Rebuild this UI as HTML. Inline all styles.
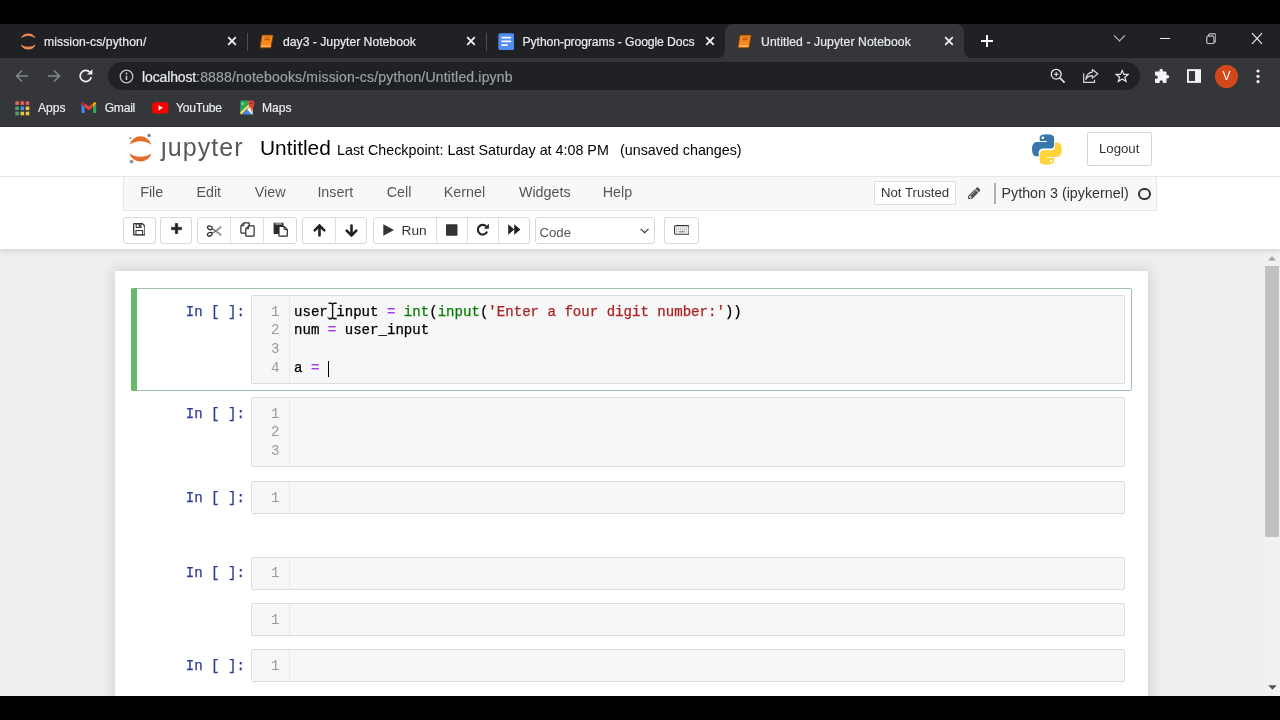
<!DOCTYPE html>
<html>
<head>
<meta charset="utf-8">
<title>Untitled - Jupyter Notebook</title>
<style>
html,body{margin:0;padding:0;}
body{width:1280px;height:720px;background:#000;position:relative;overflow:hidden;font-family:"Liberation Sans",sans-serif;}
.abs{position:absolute;}
/* chrome */
#tabstrip{left:0;top:24px;width:1280px;height:34px;background:#202124;}
#toolbar{left:0;top:58px;width:1280px;height:36px;background:#35363a;}
#bookmarks{left:0;top:94px;width:1280px;height:33px;background:#35363a;}
#omni{left:108px;top:62px;width:1031.500px;height:28px;border-radius:14px;background:#202124;}
.tabtxt{position:absolute;top:33.700px;font-size:12.2px;color:#e8eaed;white-space:nowrap;line-height:16px;}
.bmtxt{position:absolute;top:99.800px;font-size:12.1px;color:#e8eaed;white-space:nowrap;line-height:16px;}
#activetab{left:725px;top:24px;width:239px;height:34px;background:#35363a;border-radius:8px 8px 0 0;}
/* page */
#page{left:0;top:127px;width:1280px;height:569px;background:#eeeeee;overflow:hidden;}
#header{left:0;top:0;width:1280px;height:122px;background:#fff;box-shadow:0 0 6px 1px rgba(87,87,87,0.25);}
#menubar{left:123px;top:49px;width:1034px;height:35px;background:#f8f8f8;border:1px solid #e7e7e7;box-sizing:border-box;border-radius:2px;}
.menu{position:absolute;top:57px;font-size:14.3px;color:#555;line-height:17px;white-space:nowrap;}
.btn{position:absolute;top:90px;height:27px;box-sizing:border-box;border:1px solid #d9d9d9;background:#fff;border-radius:3px;}
.sep{position:absolute;top:0;width:1px;height:25px;background:#dedede;}
#nb{left:115px;top:144px;width:1033px;height:440px;background:#fff;box-shadow:0 0 12px 1px rgba(87,87,87,0.2);}
.prompt{position:absolute;left:185.700px;font-family:"Liberation Mono",monospace;font-size:14.1px;color:#2c3a96;white-space:pre;line-height:19px;}
.input{position:absolute;left:251px;width:874px;box-sizing:border-box;border:1px solid #dcdcdc;border-radius:2px;background:#f7f7f7;}
.gutter{position:absolute;left:0;top:0;bottom:0;width:37px;border-right:1px solid #e8e8e8;background:#f7f7f7;}
.ln{position:absolute;left:271px;font-family:"Liberation Mono",monospace;font-size:14.1px;color:#999;line-height:19px;}
.code{position:absolute;left:294px;font-family:"Liberation Mono",monospace;font-size:14.08px;color:#000;white-space:pre;line-height:19px;}
.k{color:#067d06;} .s{color:#ad2222;} .o{color:#a535f0;}
.code,.prompt{-webkit-text-stroke:0.25px currentColor;}
.tabtxt,.bmtxt,#url{-webkit-text-stroke:0.2px currentColor;}
#scroll{left:1264px;top:123px;width:16px;height:446px;background:#f1f1f1;}
</style>
</head>
<body><div id="wrap" style="position:absolute;left:0;top:0;width:1280px;height:720px;will-change:transform;">
<!-- Chrome tab strip -->
<div id="tabstrip" class="abs"></div>
<div id="activetab" class="abs"></div>
<div id="toolbar" class="abs"></div>
<div class="abs" style="left:717px;top:50px;width:8px;height:8px;background:radial-gradient(circle at 0 0, rgba(53,54,58,0) 7.5px, #35363a 8.5px);"></div>
<div class="abs" style="left:964px;top:50px;width:8px;height:8px;background:radial-gradient(circle at 100% 0, rgba(53,54,58,0) 7.5px, #35363a 8.5px);"></div>
<div id="bookmarks" class="abs"></div>
<div id="omni" class="abs"></div>
<div class="abs" style="left:0;top:126px;width:1280px;height:1px;background:#2d2e32;"></div>

<div class="tabtxt" style="left:44px;letter-spacing:0.08px;">mission-cs/python/</div>
<div class="tabtxt" style="left:283px;">day3 - Jupyter Notebook</div>
<div class="tabtxt" style="left:522.600px;letter-spacing:-0.1px;">Python-programs - Google Docs</div>
<div class="tabtxt" style="left:761px;letter-spacing:0.08px;">Untitled - Jupyter Notebook</div>

<div class="abs" id="url" style="left:142px;top:67.700px;font-size:14px;line-height:18px;color:#9aa0a6;white-space:nowrap;"><span style="color:#e8eaed;letter-spacing:-0.13px">localhost</span><span style="letter-spacing:0.176px">:8888/notebooks/mission-cs/python/Untitled.ipynb</span></div>

<div class="bmtxt" style="left:38px;">Apps</div>
<div class="bmtxt" style="left:104.700px;letter-spacing:-0.25px;">Gmail</div>
<div class="bmtxt" style="left:176px;letter-spacing:-0.25px;">YouTube</div>
<div class="bmtxt" style="left:262px;">Maps</div>


<!-- tab favicons, close buttons, separators -->
<svg class="abs" style="left:20px;top:33px;" width="17" height="17" viewBox="0 0 17 17"><path d="M0.700 5.300A8.190 8.190 0 0 1 15.700 5.300A13.380 13.380 0 0 0 0.700 5.300Z" fill="#e98a4e"/><path d="M0.700 11.200A8 8 0 0 0 15.700 11.200A12.100 12.100 0 0 1 0.700 11.200Z" fill="#e98a4e"/></svg>
<svg class="abs book" style="left:259.200px;top:33.500px;" width="15.600" height="15.600" viewBox="0 0 15 15"><path d="M4 1H12.600a.9.900 0 0 1 .9 1.100L11.700 12.300a1.300 1.300 0 0 1-1.300 1.100H1.900a.9.900 0 0 1-.9-1.100L2.700 2.100A1.300 1.300 0 0 1 4 1Z" fill="#f68a1e" stroke="#7a3c04" stroke-width="0.900"/><path d="M5.300 3.600h5.400M5 5.400h5.400" stroke="#b35a08" stroke-width="1"/><path d="M1.900 11.600h9.400" stroke="#ffc27a" stroke-width="1.100"/></svg>
<svg class="abs" style="left:497.600px;top:32.600px;" width="16.600" height="17.600" viewBox="0 0 16 17"><rect x="0.300" y="0.300" width="15.400" height="16.400" rx="2.200" fill="#4f8df5"/><path d="M3.300 4.500h9.400M3.300 8.100h9.400M3.300 11.700h6" stroke="#fff" stroke-width="1.800"/></svg>
<svg class="abs book" style="left:737.200px;top:33.500px;" width="15.600" height="15.600" viewBox="0 0 15 15"><path d="M4 1H12.600a.9.900 0 0 1 .9 1.100L11.700 12.300a1.300 1.300 0 0 1-1.300 1.100H1.900a.9.900 0 0 1-.9-1.100L2.700 2.100A1.300 1.300 0 0 1 4 1Z" fill="#f68a1e" stroke="#7a3c04" stroke-width="0.900"/><path d="M5.300 3.600h5.400M5 5.400h5.400" stroke="#b35a08" stroke-width="1"/><path d="M1.900 11.600h9.400" stroke="#ffc27a" stroke-width="1.100"/></svg>
<svg class="abs" style="left:227px;top:36px;" width="10" height="10" viewBox="0 0 10 10"><path d="M1.200 1.200L8.800 8.800M8.800 1.200L1.200 8.800" stroke="#f1f3f4" stroke-width="1.800"/></svg>
<svg class="abs" style="left:466px;top:36px;" width="10" height="10" viewBox="0 0 10 10"><path d="M1.200 1.200L8.800 8.800M8.800 1.200L1.200 8.800" stroke="#f1f3f4" stroke-width="1.800"/></svg>
<svg class="abs" style="left:705px;top:36px;" width="10" height="10" viewBox="0 0 10 10"><path d="M1.200 1.200L8.800 8.800M8.800 1.200L1.200 8.800" stroke="#f1f3f4" stroke-width="1.800"/></svg>
<svg class="abs" style="left:944px;top:36px;" width="10" height="10" viewBox="0 0 10 10"><path d="M1.200 1.200L8.800 8.800M8.800 1.200L1.200 8.800" stroke="#f1f3f4" stroke-width="1.800"/></svg>
<div class="abs" style="left:247px;top:33px;width:1px;height:18px;background:#4a4d51;"></div>
<div class="abs" style="left:486px;top:33px;width:1px;height:18px;background:#4a4d51;"></div>
<svg class="abs" style="left:980px;top:34px;" width="14" height="14" viewBox="0 0 14 14"><path d="M7 1V13M1 7H13" stroke="#fff" stroke-width="1.900"/></svg>
<!-- window controls -->
<svg class="abs" style="left:1113px;top:34px;" width="13" height="9" viewBox="0 0 13 9"><path d="M1 1.300L6.500 7 12 1.300" fill="none" stroke="#b5b7ba" stroke-width="1.200"/></svg>
<div class="abs" style="left:1160px;top:38px;width:10px;height:1px;background:#e8eaed;"></div>
<svg class="abs" style="left:1205.500px;top:32.700px;" width="10.800" height="11.700" viewBox="0 0 12 13"><rect x="0.900" y="3.400" width="8" height="8.500" rx="1" fill="none" stroke="#e8eaed" stroke-width="1.100"/><path d="M3 3.400V2a1 1 0 0 1 1-1h6a1 1 0 0 1 1 1v7a1 1 0 0 1-1 1H9" fill="none" stroke="#e8eaed" stroke-width="1.100"/></svg>
<svg class="abs" style="left:1251px;top:32px;" width="12" height="13" viewBox="0 0 12 13"><path d="M1 1.200L11 11.800M11 1.200L1 11.800" stroke="#e8eaed" stroke-width="1.200"/></svg>
<!-- nav icons -->
<svg class="abs" style="left:15px;top:69px;" width="14" height="14" viewBox="0 0 14 14"><path d="M13 7H1.800M7 1.500L1.500 7 7 12.500" fill="none" stroke="#85888c" stroke-width="1.500"/></svg>
<svg class="abs" style="left:47px;top:69px;" width="14" height="14" viewBox="0 0 14 14"><path d="M1 7H12.200M7 1.500L12.500 7 7 12.500" fill="none" stroke="#85888c" stroke-width="1.500"/></svg>
<svg class="abs" style="left:78px;top:68px;" width="16" height="16" viewBox="0 0 16 16"><path d="M13.200 9.300A5.600 5.600 0 1 1 11.900 4.200" fill="none" stroke="#f1f3f4" stroke-width="1.700"/><path d="M14.400 1.200V6.600H9Z" fill="#f1f3f4"/></svg>
<svg class="abs" style="left:119px;top:69px;" width="15" height="15" viewBox="0 0 15 15"><circle cx="7.500" cy="7.500" r="6.300" fill="none" stroke="#c4c7ca" stroke-width="1.300"/><path d="M7.500 6.700V11" stroke="#c4c7ca" stroke-width="1.500"/><circle cx="7.500" cy="4.500" r="0.900" fill="#c4c7ca"/></svg>
<svg class="abs" style="left:1050px;top:68px;" width="16" height="16" viewBox="0 0 16 16"><circle cx="6.200" cy="6.200" r="4.900" fill="none" stroke="#e8eaed" stroke-width="1.300"/><path d="M9.900 9.900L14.600 14.600" stroke="#e8eaed" stroke-width="1.600"/><path d="M6.200 3.900V8.500M3.900 6.200H8.500" stroke="#e8eaed" stroke-width="1.100"/></svg>
<svg class="abs" style="left:1082px;top:68px;" width="17" height="16" viewBox="0 0 17 16"><path d="M1.700 5.200V14.300H12.500V11.800" fill="none" stroke="#d0d2d6" stroke-width="1.200"/><path d="M10.300 1.500L15.800 5.800 10.300 10.100V7.600C7 7.600 5 9 3.800 11.500 4.200 7.500 6.500 4.600 10.300 4.100Z" fill="none" stroke="#dadce0" stroke-width="1.200" stroke-linejoin="round"/></svg>
<svg class="abs" style="left:1114.800px;top:68.800px;" width="14.400" height="14.400" viewBox="0 0 16 16"><path d="M8 1.600L9.900 6H14.700L10.900 9.100 12.300 13.900 8 11.100 3.700 13.900 5.100 9.100 1.300 6H6.100Z" fill="none" stroke="#e8eaed" stroke-width="1.300" stroke-linejoin="miter"/></svg>
<svg class="abs" style="left:1153px;top:68px;" width="17" height="16" viewBox="0 0 17 16"><path d="M6.500 2.500a1.700 1.700 0 0 1 3.400 0V3.500H12.500a1 1 0 0 1 1 1V7h1a1.700 1.700 0 0 1 0 3.500h-1V14a1 1 0 0 1-1 1H9.800V13.800a1.600 1.600 0 0 0-3.200 0V15H3a1 1 0 0 1-1-1V10.800H3.200a1.600 1.600 0 0 0 0-3.200H2V4.500a1 1 0 0 1 1-1H6.500Z" fill="#f1f3f4"/></svg>
<svg class="abs" style="left:1187px;top:69px;" width="14.200" height="14.500" viewBox="0 0 15 15"><rect x="1" y="1" width="13" height="12.500" fill="none" stroke="#f1f3f4" stroke-width="2"/><rect x="8.500" y="1" width="5.500" height="12.500" fill="#f1f3f4"/></svg>
<div class="abs" style="left:1215px;top:65px;width:23px;height:23px;border-radius:50%;background:#d2481a;"></div>
<div class="abs" id="avatar" style="left:1215px;top:67.800px;width:23px;text-align:center;font-size:12px;line-height:17px;color:#fff;">V</div>
<svg class="abs" style="left:1255px;top:68px;" width="6" height="16" viewBox="0 0 6 16"><circle cx="3" cy="3" r="1.600" fill="#f1f3f4"/><circle cx="3" cy="8.300" r="1.600" fill="#f1f3f4"/><circle cx="3" cy="13.600" r="1.600" fill="#f1f3f4"/></svg>
<!-- bookmark icons -->
<svg class="abs" style="left:15px;top:100.500px;" width="15" height="15" viewBox="0 0 15 15"><rect x="0.300" y="0.300" width="3.600" height="3.600" fill="#e2675f"/><rect x="5.500" y="0.300" width="3.600" height="3.600" fill="#e2625a"/><rect x="10.700" y="0.300" width="3.600" height="3.600" fill="#e2625a"/><rect x="0.300" y="5.500" width="3.600" height="3.600" fill="#4aa56c"/><rect x="5.500" y="5.500" width="3.600" height="3.600" fill="#4a8fe0"/><rect x="10.700" y="5.500" width="3.600" height="3.600" fill="#efc347"/><rect x="0.300" y="10.700" width="3.600" height="3.600" fill="#4aa56c"/><rect x="5.500" y="10.700" width="3.600" height="3.600" fill="#efc347"/><rect x="10.700" y="10.700" width="3.600" height="3.600" fill="#efc347"/></svg>
<svg class="abs" style="left:81.300px;top:101.700px;" width="15.600" height="11.700" viewBox="0 0 16 12"><path d="M0.500 1.500V11.300H3.700V5.200Z" fill="#4285f4"/><path d="M15.500 1.500V11.300H12.300V5.200Z" fill="#34a853"/><path d="M0.500 1.500L3.700 5.200V1.200L2.600 0.500C1.500 -0.200 0.500 0.500 0.500 1.500Z" fill="#c5221f"/><path d="M15.500 1.500L12.300 5.200V1.200L13.400 0.500C14.500 -0.200 15.500 0.500 15.500 1.500Z" fill="#fbbc04"/><path d="M3.700 1.200L8 4.500 12.300 1.200V5.200L8 8.500 3.700 5.200Z" fill="#ea4335"/></svg>
<svg class="abs" style="left:152px;top:102.300px;" width="16.500" height="11.600" viewBox="0 0 17 12"><rect x="0.200" y="0.200" width="16.600" height="11.600" rx="3" fill="#ff0000"/><path d="M6.800 3.300L11.300 6 6.800 8.700Z" fill="#fff"/></svg>
<svg class="abs" style="left:239.500px;top:100px;" width="15" height="15" viewBox="0 0 15 15"><path d="M0.300 1.200a.8.800 0 0 1 .8-.8H9V6L0.300 13.500Z" fill="#2da75a"/><circle cx="2.700" cy="3.700" r="1.200" fill="#8fd3a5"/><path d="M0.300 12.200L8.800 4.300 10.100 5.700 1.700 14.400H1.100a.8.800 0 0 1-.8-.8Z" fill="#f5d96b"/><path d="M2.200 14.400L7 9.400 11.800 14.400Z" fill="#4285f4"/><path d="M7 9.400L10 6.200 12.700 7V14.400H11.800Z" fill="#f1f3f4"/><path d="M11.300 0.300A3 3 0 0 1 14.300 3.300C14.300 5.600 12.300 8 11.900 12.400 11.300 8 8.300 5.600 8.300 3.300A3 3 0 0 1 11.300 0.300Z" fill="#e94335"/><circle cx="11.300" cy="3.200" r="1" fill="#8c1a12"/></svg>

<!-- Page -->
<div id="page" class="abs">
  <div id="scroll" class="abs">
  <svg class="abs" style="left:4px;top:6px;" width="8" height="5" viewBox="0 0 8 5"><path d="M0 4.500L4 0.300 8 4.500Z" fill="#a3a3a3"/></svg>
  <div class="abs" style="left:1px;top:16px;width:14px;height:271px;background:#c1c1c1;"></div>
  <svg class="abs" style="left:3.500px;top:434.500px;" width="9" height="5" viewBox="0 0 9 5"><path d="M0.300 0.300L4.500 4.700 8.700 0.300Z" fill="#505050"/></svg>
</div>
  <div id="header" class="abs"></div>
  <div id="menubar" class="abs"></div>
  
  <!-- header line -->
  <div class="abs" style="left:0;top:49px;width:1280px;height:1px;background:#e7e7e7;"></div>
  <!-- jupyter logo -->
  <svg class="abs" style="left:127px;top:6px;" width="27" height="32" viewBox="0 0 27 32">
    <path d="M2.400 11.800A11.430 11.430 0 0 1 24.500 11.800A18.800 18.800 0 0 0 2.400 11.800Z" fill="#e46e2e"/>
    <path d="M2.400 20.200A11.470 11.470 0 0 0 24.500 20.200A18.800 18.800 0 0 1 2.400 20.200Z" fill="#e46e2e"/>
    <circle cx="22.100" cy="2.400" r="1.600" fill="#767677"/>
    <circle cx="3.300" cy="5.200" r="0.900" fill="#767677"/>
    <circle cx="4.600" cy="28.600" r="1.900" fill="#989798"/>
  </svg>
  <div class="abs" id="jtxt" style="left:161px;top:5px;font-size:25px;line-height:30px;color:#585858;letter-spacing:1.1px;white-space:nowrap;">jupyter</div>
  <div class="abs" style="left:159px;top:8px;width:8px;height:5.5px;background:#fff;"></div>
  <div class="abs" id="fname" style="left:260px;top:9px;font-size:20.9px;line-height:24px;color:#000;white-space:nowrap;">Untitled</div>
  <div class="abs" id="chk" style="left:337px;top:15px;font-size:14.3px;line-height:17px;color:#000;white-space:nowrap;">Last Checkpoint: Last Saturday at 4:08 PM</div>
  <div class="abs" id="unsaved" style="left:620px;top:15px;font-size:14.3px;line-height:17px;color:#000;white-space:nowrap;">(unsaved changes)</div>
  <!-- python logo -->
  <svg class="abs" style="left:1032px;top:7px;" width="30" height="31" viewBox="0 0 110 112">
    <path fill="#3776ab" d="M54.3 0C26.5 0 28.3 12 28.3 12l.03 12.5h26.5v3.7H17.8S0 26.200 0 54.200c0 28 15.500 27 15.500 27h9.300v-13s-.5-15.500 15.300-15.500h26.300s14.800.24 14.800-14.300V14.500S83.400 0 54.300 0zM39.700 8.400a4.800 4.800 0 1 1 0 9.600 4.800 4.800 0 0 1 0-9.600z"/>
    <path fill="#ffd43b" d="M55.100 111.500c27.800 0 26-12 26-12l-.03-12.500H54.600v-3.700h37s17.800 2 17.800-26-15.500-27-15.500-27h-9.300v13s.5 15.500-15.300 15.500H43s-14.800-.24-14.800 14.300v24S26 111.500 55.100 111.500zm14.600-8.400a4.800 4.800 0 1 1 0-9.600 4.800 4.800 0 0 1 0 9.600z"/>
  </svg>
  <div class="abs" style="left:1087px;top:5px;width:65px;height:34px;box-sizing:border-box;border:1px solid #d8d8d8;border-radius:2px;background:#fff;"></div>
  <div class="abs" id="logout" style="left:1099px;top:14px;font-size:13.2px;line-height:16px;color:#333;white-space:nowrap;">Logout</div>
  <!-- menus -->
  <div class="menu" style="left:140.2px;">File</div>
  <div class="menu" style="left:196.4px;">Edit</div>
  <div class="menu" style="left:254.8px;">View</div>
  <div class="menu" style="left:317.4px;">Insert</div>
  <div class="menu" style="left:386.7px;">Cell</div>
  <div class="menu" style="left:443.8px;">Kernel</div>
  <div class="menu" style="left:518.9px;">Widgets</div>
  <div class="menu" style="left:602.8px;">Help</div>
  <!-- not trusted -->
  <div class="abs" style="left:874px;top:54px;width:82px;height:24px;box-sizing:border-box;border:1px solid #ddd;border-radius:2px;background:#fff;"></div>
  <div class="abs" id="nt" style="left:881px;top:58px;font-size:13.2px;line-height:16px;color:#333;white-space:nowrap;">Not Trusted</div>
  <svg class="abs" style="left:967.800px;top:59.900px;" width="12.600" height="12.600" viewBox="0 0 1536 1536"><path fill="#555" d="M363 1408l91-91-235-235-91 91v107h128v128h107zm523-928q0-22-22-22-10 0-17 7l-542 542q-7 7-7 17 0 22 22 22 10 0 17-7l542-542q7-7 7-17zm-54-192l416 416-832 832H0v-416zm683 96q0 53-37 90l-166 166-416-416 166-165q36-38 90-38 53 0 91 38l235 234q37 39 37 91z"/></svg>
  <div class="abs" style="left:994px;top:56px;width:2px;height:21px;background:#b0b0b0;"></div>
  <div class="abs" id="kern" style="left:1001.5px;top:58px;font-size:14.3px;line-height:17px;color:#333;white-space:nowrap;">Python 3 (ipykernel)</div>
  <div class="abs" style="left:1138px;top:60.500px;width:12.500px;height:12.500px;box-sizing:border-box;border:2px solid #333;border-radius:50%;"></div>
  <!-- toolbar buttons -->
  <div class="btn" style="left:123px;width:32.500px;"></div>
  <div class="btn" style="left:160px;width:32px;"></div>
  <div class="btn" style="left:197px;width:100px;"><div class="sep" style="left:32px;"></div><div class="sep" style="left:65px;"></div></div>
  <div class="btn" style="left:302px;width:65px;"><div class="sep" style="left:32px;"></div></div>
  <div class="btn" style="left:373px;width:157px;"><div class="sep" style="left:62px;"></div><div class="sep" style="left:93px;"></div><div class="sep" style="left:124px;"></div></div>
  <div class="btn" style="left:535px;width:120px;"></div>
  <div class="btn" style="left:664px;width:35px;"></div>
  <div class="abs" id="run" style="left:401.500px;top:95.200px;font-size:13.700px;line-height:17px;color:#333;">Run</div>
  <div class="abs" id="codesel" style="left:539.500px;top:96.500px;font-size:13.2px;line-height:17px;color:#555;">Code</div>

  <!-- toolbar icons (page coords = screen y - 127) -->
  <svg class="abs" style="left:132.600px;top:96.100px;" width="12.600" height="12.600" viewBox="0 0 13 13"><path d="M1.2 0.700H9.600L12.300 3.400V11.800a.5.500 0 0 1-.5.500H1.200a.5.500 0 0 1-.5-.5V1.200a.5.500 0 0 1 .5-.5Z" fill="#fff" stroke="#333" stroke-width="1.300"/><rect x="3.300" y="1" width="5" height="3.600" fill="#fff" stroke="#333" stroke-width="1.100"/><rect x="5.800" y="1.300" width="1.800" height="2.600" fill="#333"/><rect x="3" y="7.800" width="7" height="4.300" fill="#fff" stroke="#333" stroke-width="1.100"/></svg>
  <svg class="abs" style="left:170.500px;top:96.100px;" width="11" height="11" viewBox="0 0 11 11"><path d="M4.200 0.300h2.600v3.900h3.900v2.600H6.800v3.900H4.200V6.800H0.300V4.200H4.200Z" fill="#222" stroke="#222" stroke-width="0.400" stroke-linejoin="round"/></svg>
  <svg class="abs" style="left:206.300px;top:97.600px;" width="16" height="12" viewBox="0 0 16 12"><path d="M6.300 8L14.700 1.500 15.100 2.700 8.600 7.300ZM6.300 4L14.700 10.500 15.100 9.300 8.600 4.700Z" fill="#fff" stroke="#555" stroke-width="0.750" stroke-linejoin="round"/><ellipse cx="3.900" cy="2.800" rx="2.400" ry="1.700" fill="#fff" stroke="#222" stroke-width="1.250" transform="rotate(25 3.900 2.800)"/><ellipse cx="3.800" cy="9.300" rx="2.400" ry="1.700" fill="#fff" stroke="#222" stroke-width="1.250" transform="rotate(-25 3.800 9.300)"/></svg>
  <svg class="abs" style="left:239.500px;top:95px;" width="15" height="15" viewBox="0 0 15 15"><path d="M3.800 0.900H8.800a.5.500 0 0 1 .5.500V10.600a.5.500 0 0 1-.5.500H1.400a.5.500 0 0 1-.5-.5V3.800Z" fill="#fff" stroke="#2b2b2b" stroke-width="1.200" stroke-linejoin="round"/><path d="M3.800 0.900V3.800H0.900" fill="none" stroke="#2b2b2b" stroke-width="1"/><path d="M8.700 3.900H13.600a.5.500 0 0 1 .5.500V13.700a.5.500 0 0 1-.5.500H6.300a.5.500 0 0 1-.5-.5V6.800Z" fill="#fff" stroke="#2b2b2b" stroke-width="1.200" stroke-linejoin="round"/><path d="M8.700 3.900V6.800H5.800" fill="none" stroke="#2b2b2b" stroke-width="1"/></svg>
  <svg class="abs" style="left:272.500px;top:95px;" width="15" height="15" viewBox="0 0 15 15"><path d="M0.600 1.500a.7.700 0 0 1 .7-.7H9.800a.7.700 0 0 1 .7.700V12H1.300a.7.700 0 0 1-.7-.7Z" fill="#2b2b2b"/><rect x="2.200" y="1.300" width="6.800" height="1.300" fill="#bbb"/><path d="M6 4.500H11.200L14.300 7.600V13.700a.5.500 0 0 1-.5.500H6.500a.5.500 0 0 1-.5-.5Z" fill="#fff" stroke="#2b2b2b" stroke-width="1.200" stroke-linejoin="round"/><path d="M11.200 4.500V7.600H14.300" fill="none" stroke="#2b2b2b" stroke-width="1"/></svg>
  <svg class="abs" style="left:312.500px;top:96.500px;" width="13" height="13" viewBox="0 0 13 13"><path d="M6.500 1.500V11.500M1.700 6.300L6.500 1.500 11.300 6.300" fill="none" stroke="#222" stroke-width="2.600" stroke-linecap="round" stroke-linejoin="miter"/></svg>
  <svg class="abs" style="left:344.500px;top:96.500px;" width="13" height="13" viewBox="0 0 13 13"><path d="M6.500 11.500V1.500M1.700 6.700L6.500 11.500 11.300 6.700" fill="none" stroke="#222" stroke-width="2.600" stroke-linecap="round" stroke-linejoin="miter"/></svg>
  <svg class="abs" style="left:383px;top:96.500px;" width="12" height="12" viewBox="0 0 12 12"><path d="M0.300 0.300L11 6 0.300 11.700Z" fill="#333"/></svg>
  <svg class="abs" style="left:446px;top:96.500px;" width="12" height="12" viewBox="0 0 12 12"><rect x="0" y="0.200" width="11.500" height="11.500" rx="0.800" fill="#333"/></svg>
  <svg class="abs" style="left:475.800px;top:96.300px;" width="13.600" height="13.600" viewBox="0 0 13 13"><path d="M10.600 8.300A4.600 4.600 0 1 1 9.700 3.200" fill="none" stroke="#222" stroke-width="2"/><path d="M12.300 0.800V5.600H7.500Z" fill="#222"/></svg>
  <svg class="abs" style="left:507.500px;top:97px;" width="13" height="11" viewBox="0 0 13 11"><path d="M0.200 0.200L6.200 5.500 0.200 10.800ZM6.200 0.200L12.400 5.500 6.200 10.800Z" fill="#222"/></svg>
  <svg class="abs" style="left:640px;top:100.700px;" width="10" height="7" viewBox="0 0 10 7"><path d="M0.700 0.900L4.600 4.700 8.500 0.900" fill="none" stroke="#333" stroke-width="1.200"/></svg>
  <svg class="abs" style="left:673.700px;top:98.200px;" width="15.600" height="9.800" viewBox="0 0 16 10"><rect x="0.600" y="0.600" width="14.800" height="8.800" rx="1.300" fill="#fff" stroke="#333" stroke-width="1.150"/><path d="M2.500 3.100h11M2.500 5h11" stroke="#333" stroke-width="0.800" stroke-dasharray="0.800 1.240"/><path d="M4.800 7h6.400" stroke="#333" stroke-width="0.800"/><path d="M2.500 7h0.900M12.600 7h0.900" stroke="#333" stroke-width="0.800"/></svg>
  <div id="nb" class="abs"></div>
  <div class="abs" id="sel" style="left:131px;top:161px;width:1000.500px;height:103px;box-sizing:border-box;border:1px solid #a3c2a9;border-radius:2px;"><div class="abs" style="left:-1px;top:-1px;width:5.500px;height:103px;background:#66bb6a;border-radius:2px 0 0 2px;"></div></div>
  <div class="prompt" style="top:175.5px;">In [ ]:</div>
  <div class="input" style="top:168px;height:88.500px;"><div class="gutter"></div></div>
  <div class="ln" style="top:175.5px;">1</div>
  <div class="ln" style="top:194.2px;">2</div>
  <div class="ln" style="top:212.9px;">3</div>
  <div class="ln" style="top:231.6px;">4</div>
  <div class="code" style="top:175.5px;">user_input <span class="o">=</span> <span class="k">int</span>(<span class="k">input</span>(<span class="s">'Enter a four digit number:'</span>))</div>
  <div class="code" style="top:194.2px;">num <span class="o">=</span> user_input</div>
  <div class="code" style="top:231.6px;">a <span class="o">=</span> </div>
  <div class="prompt" style="top:277.5px;">In [ ]:</div>
  <div class="input" style="top:270px;height:70px;"><div class="gutter"></div></div>
  <div class="ln" style="top:277.5px;">1</div>
  <div class="ln" style="top:296.2px;">2</div>
  <div class="ln" style="top:314.9px;">3</div>
  <div class="prompt" style="top:361.5px;">In [ ]:</div>
  <div class="input" style="top:354px;height:33px;"><div class="gutter"></div></div>
  <div class="ln" style="top:361.5px;">1</div>
  <div class="prompt" style="top:437.2px;">In [ ]:</div>
  <div class="input" style="top:430px;height:33px;"><div class="gutter"></div></div>
  <div class="ln" style="top:437.2px;">1</div>
  <div class="input" style="top:476px;height:33px;"><div class="gutter"></div></div>
  <div class="ln" style="top:483.5px;">1</div>
  <div class="prompt" style="top:529.5px;">In [ ]:</div>
  <div class="input" style="top:522px;height:33px;"><div class="gutter"></div></div>
  <div class="ln" style="top:529.5px;">1</div>
  <div class="abs" style="left:328px;top:233.500px;width:1.200px;height:16px;background:#000;"></div>
  <svg class="abs" style="left:327px;top:175px;" width="11" height="18" viewBox="0 0 11 18"><path d="M1.500 1.300H4.200L5.600 2.200 7 1.300H9.700M1.500 16.700H4.200L5.600 15.800 7 16.700H9.700M5.600 2.200V15.800" fill="none" stroke="#fff" stroke-width="3" opacity="0.900"/><path d="M1.500 1.300H4.200L5.600 2.200 7 1.300H9.700M1.500 16.700H4.200L5.600 15.800 7 16.700H9.700M5.600 2.200V15.800" fill="none" stroke="#111" stroke-width="1.400"/></svg>
</div>


</div></body>
</html>
